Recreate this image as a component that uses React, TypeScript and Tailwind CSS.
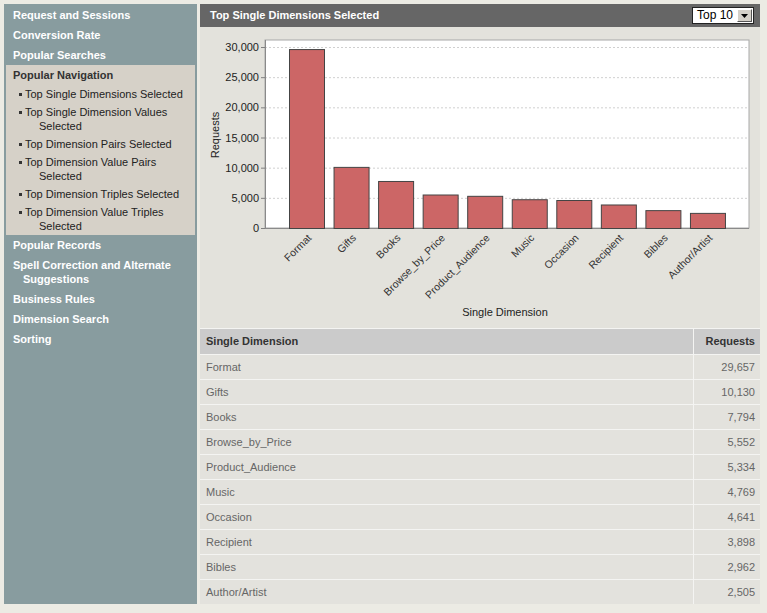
import React from "react";

const data: [string, number][] = [
  ["Format", 29657],
  ["Gifts", 10130],
  ["Books", 7794],
  ["Browse_by_Price", 5552],
  ["Product_Audience", 5334],
  ["Music", 4769],
  ["Occasion", 4641],
  ["Recipient", 3898],
  ["Bibles", 2962],
  ["Author/Artist", 2505],
];

const fmt = (n: number) => n.toLocaleString("en-US");

function Chart() {
  const left = 65;
  const right = 549;
  const top = 13;
  const bottom = 201;
  const yFor = (v: number) => bottom - (v / 30000) * 181;
  const ticks = [0, 5000, 10000, 15000, 20000, 25000, 30000];
  return (
    <svg width={560} height={301} viewBox="0 0 560 301" style={{ display: "block", fontFamily: "'Liberation Sans', Arial, sans-serif" }}>
      <rect x={left} y={top} width={right - left} height={bottom - top} fill="#ffffff" stroke="#a8a8a8" strokeWidth={1} />
      {ticks.map((t) => (
        <g key={t}>
          {t > 0 && (
            <line x1={left} x2={right} y1={yFor(t) + 0.5} y2={yFor(t) + 0.5} stroke="#d0d0d0" strokeDasharray="2 2" strokeWidth={1} />
          )}
          <line x1={left - 4} x2={left} y1={yFor(t) + 0.5} y2={yFor(t) + 0.5} stroke="#808080" strokeWidth={1} />
          <text x={59} y={yFor(t) + 4} textAnchor="end" fontSize={11} fill="#222">
            {fmt(t)}
          </text>
        </g>
      ))}
      <line x1={left + 0.5} x2={left + 0.5} y1={top} y2={bottom} stroke="#8a8a8a" strokeWidth={1} />
      <line x1={left} x2={right} y1={bottom + 0.5} y2={bottom + 0.5} stroke="#8a8a8a" strokeWidth={1} />
      {data.map(([name, v], i) => {
        const x = 89 + i * 44.55;
        const y = yFor(v);
        const cx = x + 17.5;
        return (
          <g key={name}>
            <rect x={x + 0.5} y={y + 0.5} width={35} height={bottom - y} fill="#cc6666" stroke="#444" strokeWidth={1} />
            <text
              x={cx + 3}
              y={209}
              dy="0.35em"
              textAnchor="end"
              fontSize={10.5}
              fill="#333"
              transform={`rotate(-45 ${cx + 3} 209)`}
            >
              {name}
            </text>
          </g>
        );
      })}
      <text x={305} y={289} textAnchor="middle" fontSize={11} fill="#222">
        Single Dimension
      </text>
      <text x={19} y={108} textAnchor="middle" fontSize={11} fill="#222" transform="rotate(-90 19 108)">
        Requests
      </text>
    </svg>
  );
}

function SideItem({ children }: { children: React.ReactNode }) {
  return <div className="pl-[9px] py-[3px] leading-[14px] font-bold text-white">{children}</div>;
}

function SubItem({ first, second }: { first: string; second?: string }) {
  return (
    <div className="py-[2px] leading-[14px] text-[#222] font-normal">
      <div className="flex items-center">
        <span className="ml-[13px] mr-[3px] inline-block w-[3px] h-[3px] bg-[#333]" />
        <span>{first}</span>
      </div>
      {second && <div className="pl-[33px]">{second}</div>}
    </div>
  );
}

export default function App() {
  return (
    <div
      className="min-h-screen w-full bg-[#ecebe4] pt-[4px] pl-[4px] text-[11px]"
      style={{ fontFamily: "'Liberation Sans', Arial, sans-serif" }}
    >
      <div className="flex items-stretch gap-[3px]">
        <div className="w-[193px] bg-[#889c9f] pt-[1px]">
          <SideItem>Request and Sessions</SideItem>
          <SideItem>Conversion Rate</SideItem>
          <SideItem>Popular Searches</SideItem>
          <div className="mx-[2px] bg-[#d6d1c8]">
            <div className="pl-[7px] py-[3px] leading-[14px] font-bold text-[#333]">Popular Navigation</div>
            <SubItem first="Top Single Dimensions Selected" />
            <SubItem first="Top Single Dimension Values" second="Selected" />
            <SubItem first="Top Dimension Pairs Selected" />
            <SubItem first="Top Dimension Value Pairs" second="Selected" />
            <SubItem first="Top Dimension Triples Selected" />
            <SubItem first="Top Dimension Value Triples" second="Selected" />
          </div>
          <SideItem>Popular Records</SideItem>
          <SideItem>
            <div>Spell Correction and Alternate</div>
            <div className="pl-[10px]">Suggestions</div>
          </SideItem>
          <SideItem>Business Rules</SideItem>
          <SideItem>Dimension Search</SideItem>
          <SideItem>Sorting</SideItem>
        </div>

        <div className="w-[560px]">
          <div className="h-[23px] bg-[#666666] flex items-center justify-between pl-[10px] pr-[6px]">
            <span className="font-bold text-white text-[11px]">Top Single Dimensions Selected</span>
            <div className="flex items-stretch h-[17px] w-[62px] border border-[#222] bg-white">
              <span className="flex-1 pl-[4px] text-[12px] leading-[15px] text-black">Top 10</span>
              <span className="w-[15px] m-[1px] bg-[#d4d0c8] border border-t-white border-l-white border-r-[#555] border-b-[#555] flex items-center justify-center">
                <svg width="7" height="4" viewBox="0 0 7 4">
                  <path d="M0 0 H7 L3.5 4 Z" fill="#000" />
                </svg>
              </span>
            </div>
          </div>
          <div className="h-[301px] bg-[#e3e2dc]">
            <Chart />
          </div>
          <div className="border-t border-[#f4f4f2]">
            <div className="flex h-[25px] bg-[#cbcbcb] font-bold text-[#333]">
              <div className="flex-1 pl-[6px] flex items-center">Single Dimension</div>
              <div className="w-[67px] border-l border-[#f4f4f2] pr-[5px] flex items-center justify-end">Requests</div>
            </div>
            {data.map(([name, v]) => (
              <div key={name} className="flex h-[25px] bg-[#e3e2dd] border-t border-[#f4f4f2] text-[#666]">
                <div className="flex-1 pl-[6px] flex items-center">{name}</div>
                <div className="w-[67px] border-l border-[#f4f4f2] pr-[5px] flex items-center justify-end">{fmt(v)}</div>
              </div>
            ))}
          </div>
        </div>
      </div>
    </div>
  );
}
